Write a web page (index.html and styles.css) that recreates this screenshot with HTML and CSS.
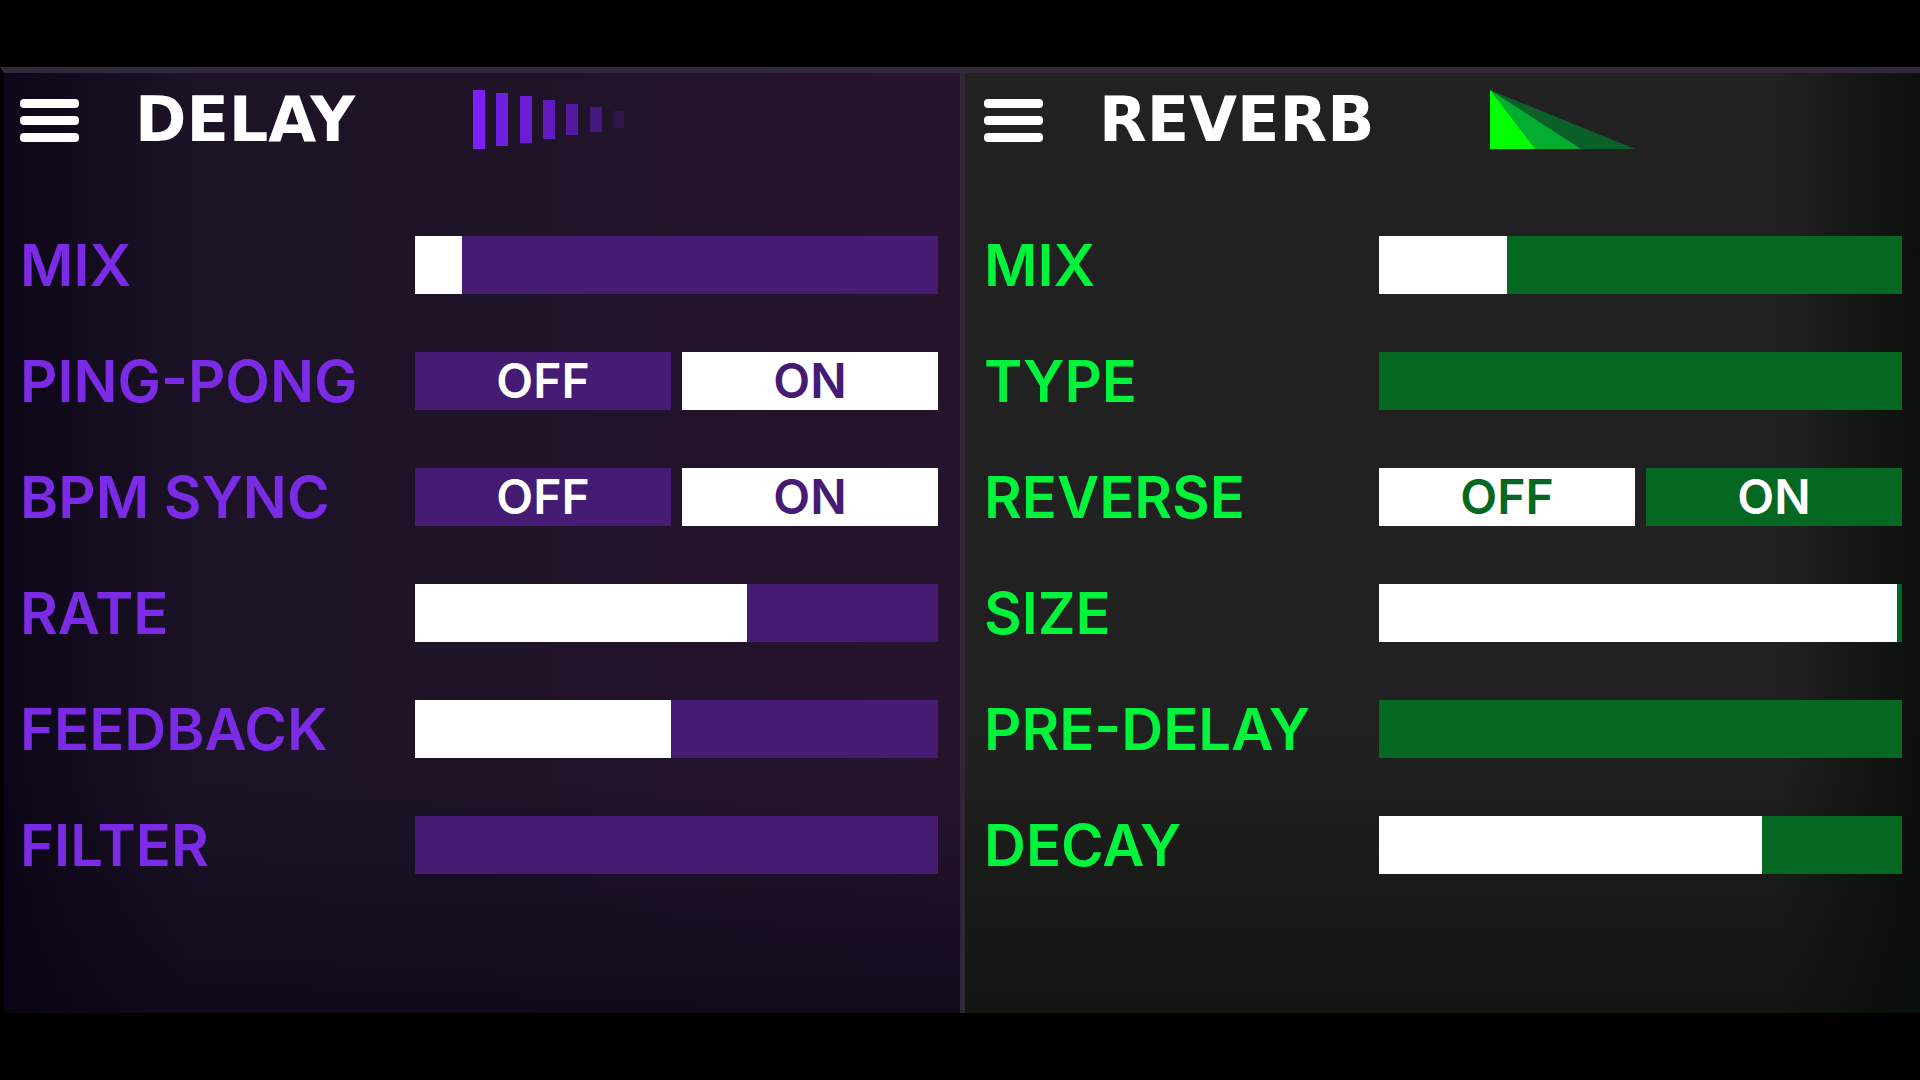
FILE: index.html
```
<!DOCTYPE html>
<html lang="en">
<head>
    <meta charset="UTF-8">
    <meta name="viewport" content="width=device-width, initial-scale=1.0">
    <title>Delay / Reverb</title>
    <link rel="stylesheet" href="styles.css">
</head>
<body>
    <main class="effects">
        <!-- Delay -->
        <section class="panel delay">
            <header class="panel-header">
                <button class="menu" type="button" aria-label="Delay menu"><span></span><span></span><span></span></button>
                <h2>DELAY</h2>
                <svg class="icon" width="154" height="60" viewBox="0 0 154 60" aria-hidden="true">
                    <g fill="#7d20ff">
                        <rect x="0" y="0" width="12" height="59"/>
                        <rect x="23" y="3" width="12" height="53" opacity=".87"/>
                        <rect x="47" y="6" width="12" height="47" opacity=".8"/>
                        <rect x="70" y="10" width="12" height="39" opacity=".7"/>
                        <rect x="93" y="14" width="12" height="31" opacity=".56"/>
                        <rect x="117" y="17" width="12" height="25" opacity=".4"/>
                        <rect x="140" y="21" width="11" height="17" opacity=".14"/>
                    </g>
                </svg>
            </header>
            <div class="controls">
                <div class="row">
                    <label for="delayMix">MIX</label>
                    <input type="range" id="delayMix" min="0" max="100" value="9" style="--value: 9%">
                </div>
                <div class="row">
                    <span class="name" id="pingPong">PING-PONG</span>
                    <div class="switch" role="group" aria-labelledby="pingPong">
                        <button type="button" aria-pressed="false">OFF</button>
                        <button type="button" aria-pressed="true">ON</button>
                    </div>
                </div>
                <div class="row">
                    <span class="name" id="bpmSync">BPM SYNC</span>
                    <div class="switch" role="group" aria-labelledby="bpmSync">
                        <button type="button" aria-pressed="false">OFF</button>
                        <button type="button" aria-pressed="true">ON</button>
                    </div>
                </div>
                <div class="row">
                    <label for="rate">RATE</label>
                    <input type="range" id="rate" min="0" max="1000" value="634" style="--value: 63.4%">
                </div>
                <div class="row">
                    <label for="feedback">FEEDBACK</label>
                    <input type="range" id="feedback" min="0" max="100" value="49" style="--value: 49%">
                </div>
                <div class="row">
                    <label for="filter">FILTER</label>
                    <input type="range" id="filter" min="0" max="100" value="0" style="--value: 0%">
                </div>
            </div>
        </section>

        <!-- Reverb -->
        <section class="panel reverb">
            <header class="panel-header">
                <button class="menu" type="button" aria-label="Reverb menu"><span></span><span></span><span></span></button>
                <h2>REVERB</h2>
                <svg class="icon" width="146" height="60" viewBox="0 0 146 60" aria-hidden="true">
                    <polygon points="0,0 145,59 0,59" fill="#0b602a"/>
                    <polygon points="0,0 91,59 0,59" fill="#04ad30"/>
                    <polygon points="0,0 45,59 0,59" fill="#00ff00"/>
                </svg>
            </header>
            <div class="controls">
                <div class="row">
                    <label for="reverbMix">MIX</label>
                    <input type="range" id="reverbMix" min="0" max="1000" value="245" style="--value: 24.5%">
                </div>
                <div class="row">
                    <label for="type">TYPE</label>
                    <select id="type">
                        <option value=""></option>
                    </select>
                </div>
                <div class="row">
                    <span class="name" id="reverse">REVERSE</span>
                    <div class="switch" role="group" aria-labelledby="reverse">
                        <button type="button" aria-pressed="true">OFF</button>
                        <button type="button" aria-pressed="false">ON</button>
                    </div>
                </div>
                <div class="row">
                    <label for="size">SIZE</label>
                    <input type="range" id="size" min="0" max="100" value="99" style="--value: 99%">
                </div>
                <div class="row">
                    <label for="preDelay">PRE-DELAY</label>
                    <input type="range" id="preDelay" min="0" max="100" value="0" style="--value: 0%">
                </div>
                <div class="row">
                    <label for="decay">DECAY</label>
                    <input type="range" id="decay" min="0" max="1000" value="733" style="--value: 73.3%">
                </div>
            </div>
        </section>
    </main>

    <script>
        // keep the filled part in step with the slider
        document.querySelectorAll('input[type="range"]').forEach(function (slider) {
            slider.addEventListener('input', function () {
                slider.style.setProperty('--value', (slider.value / slider.max * 100) + '%');
            });
        });

        document.querySelectorAll('.switch').forEach(function (group) {
            group.addEventListener('click', function (e) {
                if (e.target.tagName !== 'BUTTON') return;
                group.querySelectorAll('button').forEach(function (button) {
                    button.setAttribute('aria-pressed', button === e.target);
                });
            });
        });
    </script>
</body>
</html>
```
FILE: styles.css
```
* {
    box-sizing: border-box;
    margin: 0;
    padding: 0;
}
body {
    font-family: Inter, 'Liberation Sans', sans-serif;
    background-color: #000;
    padding: 67px 0;
}
.effects {
    display: grid;
    grid-template-columns: 1fr 1fr;
}
.panel {
    border-top: 6px solid #31283a;
    padding-top: 17px;
    padding-bottom: 139px;
}
.delay {
    --accent: #7b2be6;
    --track: #451b74;
    --title-width: 278px;
    border-left: 4px solid #000;
    padding-left: 16px;
    padding-right: 22px;
    background: linear-gradient(to right, rgba(8, 3, 20, 0.8), rgba(8, 3, 20, 0) 20%),
                linear-gradient(to bottom, rgba(14, 8, 26, 0) 75%, rgba(14, 8, 26, 0.85)),
                linear-gradient(to right, #1b1325, #1f1328 50%, #27132d);
}
.reverb {
    --accent: #00f43c;
    --track: #046822;
    --title-width: 331px;
    border-left: 5px solid #2f2735;
    padding-left: 19px;
    padding-right: 18px;
    background: linear-gradient(to left, rgba(6, 12, 7, 0.8), rgba(6, 12, 7, 0) 15%),
                linear-gradient(to bottom, rgba(16, 20, 14, 0) 70%, rgba(16, 20, 14, 0.9)),
                #212121;
}
.panel-header {
    display: flex;
    align-items: center;
    height: 60px;
    margin-bottom: 86px;
}
.menu {
    display: flex;
    flex-direction: column;
    gap: 8px;
    width: 59px;
    margin-right: 56px;
    background: none;
    border: none;
    cursor: pointer;
}
.menu span {
    display: block;
    width: 100%;
    height: 9px;
    border-radius: 4px;
    background-color: #fff;
}
h2 {
    min-width: var(--title-width);
    margin-right: 60px;
    font-family: 'DejaVu Sans', sans-serif;
    font-size: 62px;
    line-height: 60px;
    font-weight: bold;
    color: #fff;
}
.icon {
    display: block;
}
.controls {
    display: grid;
    gap: 58px;
}
.row {
    display: grid;
    grid-template-columns: 395px 1fr;
    align-items: center;
    height: 58px;
}
label,
.name {
    font-size: 58px;
    line-height: 58px;
    font-weight: 600;
    color: var(--accent);
    white-space: nowrap;
}
input[type="range"] {
    appearance: none;
    width: 100%;
    height: 58px;
    background: linear-gradient(to right, #fff var(--value), var(--track) var(--value));
    cursor: pointer;
}
input[type="range"]::-webkit-slider-thumb {
    appearance: none;
    width: 1px;
    height: 58px;
    background: transparent;
}
select {
    appearance: none;
    width: 100%;
    height: 58px;
    border: none;
    border-radius: 0;
    background-color: var(--track);
    color: #fff;
    font: 600 48px Inter, sans-serif;
}
.switch {
    display: grid;
    grid-template-columns: 1fr 1fr;
    gap: 11px;
}
.switch button {
    height: 58px;
    border: none;
    background-color: var(--track);
    color: #fff;
    font-family: inherit;
    font-size: 48px;
    line-height: 58px;
    font-weight: 600;
    cursor: pointer;
}
.switch button[aria-pressed="true"] {
    background-color: #fff;
    color: var(--track);
}
@media (max-width: 1400px) {
    .effects {
        grid-template-columns: 1fr;
    }
}
```
